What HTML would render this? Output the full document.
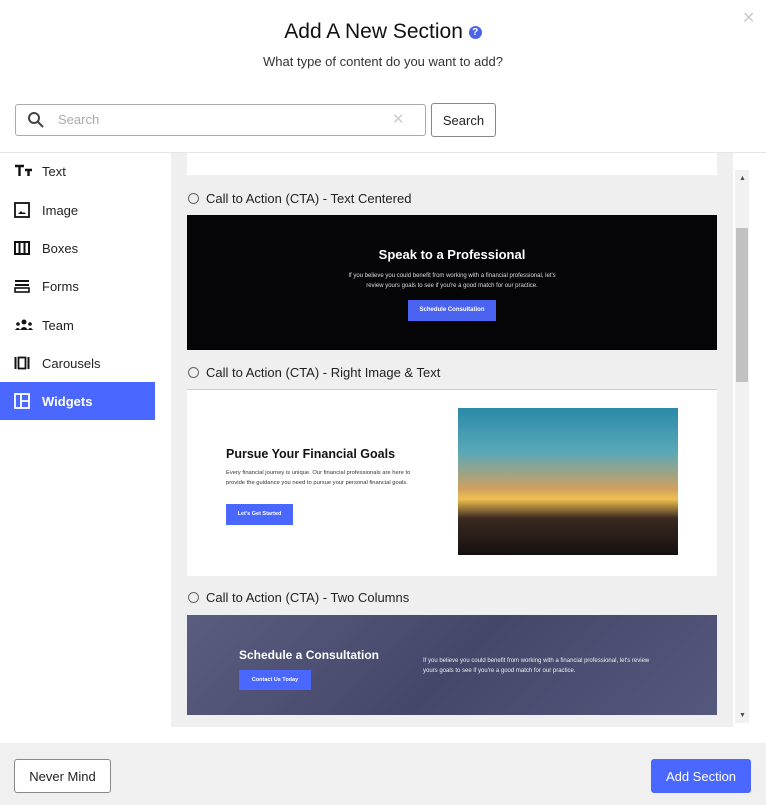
<!DOCTYPE html>
<html><head><style>
*{box-sizing:border-box;margin:0;padding:0}
body{width:766px;height:805px;overflow:hidden;background:#fff;font-family:"Liberation Sans",sans-serif;color:#222;position:relative}
.abs{position:absolute}
.nav div{position:absolute;left:0;width:155px;height:38px;font-size:13px;display:flex;align-items:center;padding-left:42px}
.nav svg{position:absolute;left:14px}
.lbl{font-size:13px;color:#222;display:flex;align-items:center}
.lbl i{display:inline-block;width:11px;height:11px;border:1px solid #666;border-radius:50%;margin-right:7px}
.btn{position:absolute;border:1px solid #888;border-radius:3px;background:#fff;font-size:13px;display:flex;align-items:center;justify-content:center}
</style></head><body>
<div class="abs" style="left:0;top:20px;width:766px;text-align:center;font-size:21px;color:#111">Add A New Section <span style="display:inline-block;width:13px;height:13px;border-radius:50%;background:#4a63e7;color:#fff;font-size:10px;line-height:13px;vertical-align:3px;font-weight:bold">?</span></div>
<div class="abs" style="left:0;top:54px;width:766px;text-align:center;font-size:13px;color:#333">What type of content do you want to add?</div>
<div class="abs" style="left:742px;top:8px;font-size:16px;color:#ccc">✕</div>
<div class="abs" style="left:15px;top:104px;width:411px;height:32px;border:1px solid #aaa;border-radius:3px"></div>
<svg class="abs" style="left:27px;top:111px" width="18" height="18" viewBox="0 0 18 18"><circle cx="7" cy="7" r="5" fill="none" stroke="#444" stroke-width="2"/><path d="M11 11l5 5" stroke="#444" stroke-width="2"/></svg>
<div class="abs" style="left:58px;top:112px;font-size:13px;color:#aaa">Search</div>
<div class="abs" style="left:392px;top:110px;font-size:15px;color:#ccc">✕</div>
<div class="btn" style="left:431px;top:103px;width:65px;height:34px">Search</div>
<div class="abs" style="left:0;top:152px;width:766px;height:1px;background:#e6e6e6"></div>
<div class="nav">
<div style="top:152px"><svg width="20" height="14" viewBox="0 0 20 14"><path d="M1 2h9M5.5 2v10M11 6h7M14.5 6v6" stroke="#111" stroke-width="2.4"/></svg>Text</div>
<div style="top:191px"><svg width="16" height="16" viewBox="0 0 16 16"><rect x="1" y="1" width="14" height="14" fill="none" stroke="#111" stroke-width="1.8"/><path d="M4 12l3-3 2 2 1-1 2 2z" fill="#111"/></svg>Image</div>
<div style="top:229px"><svg width="16" height="14" viewBox="0 0 16 14"><rect x="1" y="1" width="14" height="12" fill="none" stroke="#111" stroke-width="2"/><path d="M5.5 1v12M10.5 1v12" stroke="#111" stroke-width="2"/></svg>Boxes</div>
<div style="top:267px"><svg width="16" height="14" viewBox="0 0 16 14"><path d="M1 2h14M1 6h14" stroke="#111" stroke-width="2"/><rect x="1" y="9" width="14" height="4" fill="none" stroke="#111" stroke-width="1.6"/></svg>Forms</div>
<div style="top:306px"><svg width="20" height="12" viewBox="0 0 20 12"><circle cx="10" cy="3" r="2.5" fill="#111"/><path d="M6 11q4-6 8 0z" fill="#111"/><circle cx="4" cy="5" r="1.8" fill="#111"/><circle cx="16" cy="5" r="1.8" fill="#111"/><path d="M1 11q3-4 5 0zM14 11q2-4 5 0z" fill="#111"/></svg>Team</div>
<div style="top:344px"><svg width="16" height="14" viewBox="0 0 16 14"><path d="M1.5 1v12M14.5 1v12" stroke="#111" stroke-width="2"/><rect x="4.5" y="1.5" width="7" height="11" fill="none" stroke="#111" stroke-width="1.8"/></svg>Carousels</div>
<div style="top:382px;background:#4a67ff;color:#fff;font-weight:bold"><svg width="16" height="16" viewBox="0 0 16 16"><rect x="1" y="1" width="14" height="14" fill="none" stroke="#fff" stroke-width="1.8"/><path d="M7 1v14M7 8h8" stroke="#fff" stroke-width="1.8"/></svg>Widgets</div>
</div>
<div class="abs" style="left:171px;top:153px;width:562px;height:574px;background:#efefef;overflow:hidden">
<div class="abs" style="left:16px;top:0;width:530px;height:22px;background:#fff"></div>
<div class="lbl abs" style="left:17px;top:38px"><i></i>Call to Action (CTA) - Text Centered</div>
<div class="abs" style="left:16px;top:62px;width:530px;height:135px;background:#050507;color:#fff;text-align:center">
<div style="margin-top:32px;font-weight:bold;font-size:13px">Speak to a Professional</div>
<div style="margin-top:9px;font-size:6px;line-height:10px;color:#ddd">If you believe you could benefit from working with a financial professional, let's<br>review yours goals to see if you're a good match for our practice.</div>
<div style="margin:9px auto 0;width:88px;height:21px;background:#4a63f0;font-size:6px;font-weight:bold;line-height:21px">Schedule Consultation</div></div>
<div class="lbl abs" style="left:17px;top:212px"><i></i>Call to Action (CTA) - Right Image &amp; Text</div>
<div class="abs" style="left:16px;top:236px;width:530px;height:187px;background:#fff;border-top:1px solid #ccc">
<div class="abs" style="left:39px;top:57px;font-weight:bold;font-size:12.5px;color:#111">Pursue Your Financial Goals</div>
<div class="abs" style="left:39px;top:79px;width:200px;font-size:5.8px;line-height:9.5px;color:#333">Every financial journey is unique. Our financial professionals are here to provide the guidance you need to pursue your personal financial goals.</div>
<div class="abs" style="left:39px;top:114px;width:67px;height:21px;background:#4a67ff;color:#fff;font-size:5.5px;font-weight:bold;text-align:center;line-height:21px">Let's Get Started</div>
<div class="abs" style="left:271px;top:18px;width:220px;height:147px;background:linear-gradient(180deg,#2a8aa8 0%,#5aa8b8 30%,#d0a060 55%,#f0c050 62%,#3a2a20 75%,#151010 100%)"></div></div>
<div class="lbl abs" style="left:17px;top:437px"><i></i>Call to Action (CTA) - Two Columns</div>
<div class="abs" style="left:16px;top:462px;width:530px;height:100px;background:linear-gradient(135deg,#5a5c80,#44466a 50%,#55587c)">
<div class="abs" style="left:52px;top:33px;color:#fff;font-weight:bold;font-size:12px">Schedule a Consultation</div>
<div class="abs" style="left:52px;top:55px;width:72px;height:20px;background:#4a67ff;color:#fff;font-size:5.5px;font-weight:bold;text-align:center;line-height:20px">Contact Us Today</div>
<div class="abs" style="left:236px;top:42px;width:230px;font-size:6px;line-height:9.5px;color:#eee">If you believe you could benefit from working with a financial professional, let's review yours goals to see if you're a good match for our practice.</div></div>
</div>
<div class="abs" style="left:735px;top:170px;width:14px;height:553px;background:#f1f1f1"></div>
<div class="abs" style="left:736px;top:228px;width:12px;height:154px;background:#c1c1c1"></div>
<div class="abs" style="left:739px;top:175px;font-size:7px;color:#505050">▲</div>
<div class="abs" style="left:739px;top:712px;font-size:7px;color:#505050">▼</div>
<div class="abs" style="left:0;top:743px;width:766px;height:62px;background:#f0f0f0"></div>
<div class="btn" style="left:14px;top:759px;width:97px;height:34px">Never Mind</div>
<div class="btn" style="left:651px;top:759px;width:100px;height:34px;background:#4a67ff;border-color:#4a67ff;color:#fff">Add Section</div>
</body></html>
